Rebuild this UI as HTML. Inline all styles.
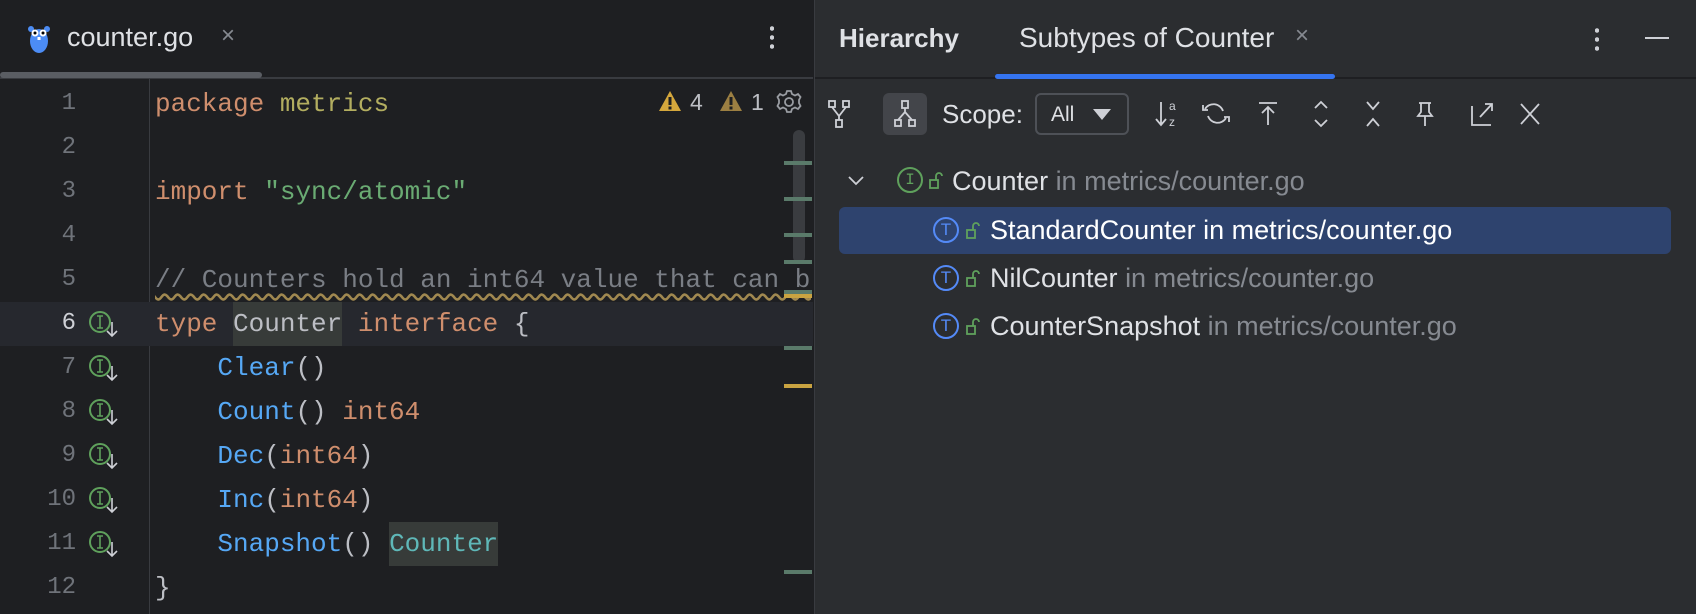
<!DOCTYPE html>
<html style="overflow:hidden;width:1696px;height:614px"><head><meta charset="utf-8"><style>
*{margin:0;padding:0;box-sizing:border-box}
body{width:1696px;height:614px;overflow:hidden;background:#1e1f22;font-family:"Liberation Sans",sans-serif;position:relative;color:#dfe1e5}
.abs{position:absolute}
#left{left:0;top:0;width:813px;height:614px;background:#1e1f22;overflow:hidden}
#right{left:814px;top:0;width:882px;height:614px;background:#2b2d30;border-left:1px solid #393b40}
.mono{font-family:"Liberation Mono",monospace;font-size:26px;white-space:pre}
.ln{position:absolute;right:0;width:76px;text-align:right;color:#6f737a;font-size:24px;line-height:44px}
.kw{color:#cf8e6d}.pk{color:#b3ae60}.str{color:#6aab73}.cm{color:#7a7e85}.fn{color:#56a8f5}.ty{color:#cf8e6d}.tc{color:#5fb8b8}
.mk{position:absolute;left:784px;width:28px;height:4px;background:#5a7a6a}
.ti{position:absolute;width:26px;height:26px;border:2px solid #548af7;border-radius:50%;color:#548af7;font-size:17px;text-align:center;line-height:22px}
.tr{position:absolute;font-size:27px;white-space:nowrap}
.gr{color:#868a91}
</style></head><body>
<div id="left" class="abs">
  <svg class="abs" style="left:26px;top:24px" width="26" height="30" viewBox="0 0 26 30"><ellipse cx="13" cy="17" rx="9" ry="12" fill="#4c8cf5"/><circle cx="5" cy="5" r="3" fill="#4c8cf5"/><circle cx="21" cy="5" r="3" fill="#4c8cf5"/><circle cx="9" cy="9" r="3.5" fill="#fff"/><circle cx="17" cy="9" r="3.5" fill="#fff"/><circle cx="9" cy="9" r="1.5" fill="#000"/><circle cx="17" cy="9" r="1.5" fill="#000"/><rect x="11.5" y="13" width="3" height="3" fill="#fff"/></svg>
  <div class="abs" style="left:67px;top:22px;font-size:27px;color:#dfe1e5">counter.go</div>
  <div class="abs" style="left:221px;top:22px;font-size:24px;color:#868a91">×</div>
  <div class="abs" style="left:770px;top:24px;width:4px;height:26px;background:radial-gradient(circle,#ced0d6 2px,transparent 2.5px) 0 0/4px 9px"></div>
  <div class="abs" style="left:0;top:77px;width:813px;height:2px;background:#393b40"></div>
  <div class="abs" style="left:0;top:72px;width:262px;height:6px;border-radius:3px;background:#5a5d63"></div>
  <div class="abs" style="left:149px;top:79px;width:1px;height:535px;background:#393b40"></div>
  <div class="abs" style="left:0;top:302px;width:813px;height:44px;background:#26282e"></div>
  <div class="abs" style="left:233px;top:302px;width:109px;height:44px;background:#373b39"></div>
  <div class="abs" style="left:389px;top:522px;width:109px;height:44px;background:#373b39"></div>
  <div class="abs" style="left:0;top:82px;width:76px;height:535px">
    <div class="ln mono" style="top:0">1</div><div class="ln mono" style="top:44px">2</div><div class="ln mono" style="top:88px">3</div><div class="ln mono" style="top:132px">4</div><div class="ln mono" style="top:176px">5</div><div class="ln mono" style="top:220px;color:#ced0d6">6</div><div class="ln mono" style="top:264px">7</div><div class="ln mono" style="top:308px">8</div><div class="ln mono" style="top:352px">9</div><div class="ln mono" style="top:396px">10</div><div class="ln mono" style="top:440px">11</div><div class="ln mono" style="top:484px">12</div>
  </div>
  <svg class="abs" style="left:88px;top:310px" width="34" height="250" viewBox="0 0 34 250" fill="none" stroke-width="2">
    <g id="g1"><circle cx="12" cy="12" r="10" stroke="#5fa15c"/><path d="M9 6h6M12 6v12M9 18h6" stroke="#5fa15c" stroke-width="1.6"/><path d="M24 12v14M19 21l5 5 5-5" stroke="#ced0d6" stroke-width="1.6"/></g>
    <use href="#g1" y="44"/><use href="#g1" y="88"/><use href="#g1" y="132"/><use href="#g1" y="176"/><use href="#g1" y="220"/>
  </svg>
  <div class="abs mono" style="left:155px;top:82px;line-height:44px;color:#bcbec4;width:656px;overflow:hidden"><span class="kw">package</span> <span class="pk">metrics</span>

<span class="kw">import</span> <span class="str">"sync/atomic"</span>

<span class="cm" style="text-decoration:underline wavy #a08850;text-underline-offset:6px">// Counters hold an int64 value that can be</span>
<span class="kw">type</span> Counter <span class="kw">interface</span> {
    <span class="fn">Clear</span>()
    <span class="fn">Count</span>() <span class="ty">int64</span>
    <span class="fn">Dec</span>(<span class="ty">int64</span>)
    <span class="fn">Inc</span>(<span class="ty">int64</span>)
    <span class="fn">Snapshot</span>() <span class="tc">Counter</span>
}</div>
  <div class="abs" style="left:650px;top:84px;width:150px;height:40px;background:#1e1f22"></div>
  <svg class="abs" style="left:658px;top:90px" width="24" height="22"><path d="M12 1 L23 21 L1 21Z" fill="#d4a73c"/><rect x="10.5" y="7" width="3" height="8" fill="#1e1f22"/><rect x="10.5" y="16.5" width="3" height="3" fill="#1e1f22"/></svg>
  <div class="abs" style="left:690px;top:89px;font-size:23px;color:#bcbec4">4</div>
  <svg class="abs" style="left:719px;top:90px" width="24" height="22"><path d="M12 1 L23 21 L1 21Z" fill="#9c7f42"/><rect x="10.5" y="7" width="3" height="8" fill="#1e1f22"/><rect x="10.5" y="16.5" width="3" height="3" fill="#1e1f22"/></svg>
  <div class="abs" style="left:751px;top:89px;font-size:23px;color:#bcbec4">1</div>
  <svg class="abs" style="left:776px;top:89px" width="26" height="26" viewBox="0 0 26 26" fill="none" stroke="#9a9da3" stroke-width="1.8"><circle cx="13" cy="13" r="4"/><path d="M11 2h4l1 3 3 1.5 3-1.5 2.5 3-1.5 3 0 3 1.5 3-2.5 3-3-1.5-3 1.5-1 3h-4l-1-3-3-1.5-3 1.5-2.5-3 1.5-3v-3l-1.5-3 2.5-3 3 1.5 3-1.5z"/></svg>
  <div class="abs" style="left:793px;top:130px;width:12px;height:133px;border-radius:6px;background:#3a3c40"></div>
  <div class="mk" style="top:161px"></div><div class="mk" style="top:197px"></div><div class="mk" style="top:233px"></div><div class="mk" style="top:260px"></div><div class="mk" style="top:290px"></div><div class="mk" style="top:294px;background:#c9a341"></div><div class="mk" style="top:346px"></div><div class="mk" style="top:384px;background:#c9a341"></div><div class="mk" style="top:570px"></div>
</div>
<div id="right" class="abs">
  <div class="abs" style="left:24px;top:23px;font-size:26px;font-weight:bold;color:#dfe1e5">Hierarchy</div>
  <div class="abs" style="left:204px;top:22px;font-size:28px;color:#dfe1e5">Subtypes of Counter</div>
  <div class="abs" style="left:480px;top:22px;font-size:24px;color:#868a91">×</div>
  <div class="abs" style="left:780px;top:26px;width:4px;height:26px;background:radial-gradient(circle,#ced0d6 2px,transparent 2.5px) 0 0/4px 9px"></div>
  <div class="abs" style="left:830px;top:37px;width:24px;height:2px;background:#ced0d6"></div>
  <div class="abs" style="left:0;top:77px;width:882px;height:2px;background:#1e1f22"></div>
  <div class="abs" style="left:180px;top:74px;width:340px;height:5px;border-radius:3px;background:#3574f0"></div>
  <svg class="abs" style="left:12px;top:100px" width="24" height="28" viewBox="0 0 24 28" fill="none" stroke="#ced0d6" stroke-width="1.8"><rect x="2" y="1" width="6" height="6"/><rect x="16" y="1" width="6" height="6"/><rect x="9" y="20" width="6" height="7"/><path d="M5 7 12 16 19 7M12 16v4"/></svg>
  <div class="abs" style="left:68px;top:93px;width:44px;height:42px;border-radius:6px;background:#43454a"></div>
  <svg class="abs" style="left:78px;top:100px" width="24" height="28" viewBox="0 0 24 28" fill="none" stroke="#ced0d6" stroke-width="1.8"><rect x="9" y="1" width="6" height="7"/><rect x="2" y="20" width="6" height="6"/><rect x="16" y="20" width="6" height="6"/><path d="M12 8v4L5 20M12 12l7 8"/></svg>
  <div class="abs" style="left:127px;top:99px;font-size:26px;color:#dfe1e5">Scope:</div>
  <div class="abs" style="left:220px;top:93px;width:94px;height:42px;border:2px solid #4e5157;border-radius:6px"></div>
  <div class="abs" style="left:236px;top:103px;font-size:21px;color:#dfe1e5">All</div>
  <svg class="abs" style="left:278px;top:109px" width="18" height="12"><path d="M0 0h18L9 11z" fill="#ced0d6"/></svg>
  <svg class="abs" style="left:340px;top:98px" width="400" height="32" viewBox="0 0 400 32" fill="none" stroke="#ced0d6" stroke-width="1.8">
    <path d="M6 4v22M1 21l5 6 5-6"/><text x="14" y="12" font-size="12" fill="#ced0d6" stroke="none" font-family="Liberation Sans">a</text><text x="14" y="28" font-size="12" fill="#ced0d6" stroke="none" font-family="Liberation Sans">z</text>
    <path d="M50 11a10 10 0 0 1 18 2M71 20a10 10 0 0 1-18-2M48 7v5h5M74 24v-5h-5"/>
    <path d="M104 5h18M113 27V9M107 15l6-6 6 6"/>
    <path d="M160 10l6-6 6 6M160 22l6 6 6-6"/>
    <path d="M212 4l6 7 6-7M212 28l6-7 6 7"/>
    <path d="M264 5h12M266 5v9l-3 4h14l-3-4V5M270 18v10"/>
    <path d="M317 8v19h19M325 19l12-13M330 6h7v7"/>
    <path d="M366 6l18 20M384 6l-18 20"/>
  </svg>
  <div class="abs" style="left:24px;top:207px;width:832px;height:47px;border-radius:6px;background:#2e436e"></div>
  <svg class="abs" style="left:32px;top:175px" width="18" height="12"><path d="M2 2l7 7 7-7" fill="none" stroke="#ced0d6" stroke-width="1.8"/></svg>
  <div class="abs" style="left:82px;top:167px;width:26px;height:26px;border:2px solid #5fa15c;border-radius:50%;color:#5fa15c;font-size:16px;font-family:'Liberation Mono',monospace;text-align:center;line-height:22px">I</div>
  <svg class="abs" style="left:114px;top:171px" width="14" height="18" fill="none" stroke="#5fa15c" stroke-width="1.8"><rect x="1" y="9" width="8" height="8"/><path d="M7 9V5a3 3 0 0 1 6 0"/></svg>
  <div class="tr" style="left:137px;top:166px">Counter <span class="gr">in metrics/counter.go</span></div>
  <div class="ti" style="left:118px;top:217px">T</div>
  <svg class="abs" style="left:151px;top:221px" width="14" height="18" fill="none" stroke="#5fa15c" stroke-width="1.8"><rect x="1" y="9" width="8" height="8"/><path d="M7 9V5a3 3 0 0 1 6 0"/></svg>
  <div class="tr" style="left:175px;top:215px;color:#fff">StandardCounter in metrics/counter.go</div>
  <div class="ti" style="left:118px;top:265px">T</div>
  <svg class="abs" style="left:151px;top:269px" width="14" height="18" fill="none" stroke="#5fa15c" stroke-width="1.8"><rect x="1" y="9" width="8" height="8"/><path d="M7 9V5a3 3 0 0 1 6 0"/></svg>
  <div class="tr" style="left:175px;top:263px">NilCounter <span class="gr">in metrics/counter.go</span></div>
  <div class="ti" style="left:118px;top:313px">T</div>
  <svg class="abs" style="left:151px;top:317px" width="14" height="18" fill="none" stroke="#5fa15c" stroke-width="1.8"><rect x="1" y="9" width="8" height="8"/><path d="M7 9V5a3 3 0 0 1 6 0"/></svg>
  <div class="tr" style="left:175px;top:311px">CounterSnapshot <span class="gr">in metrics/counter.go</span></div>
</div>
</body></html>
